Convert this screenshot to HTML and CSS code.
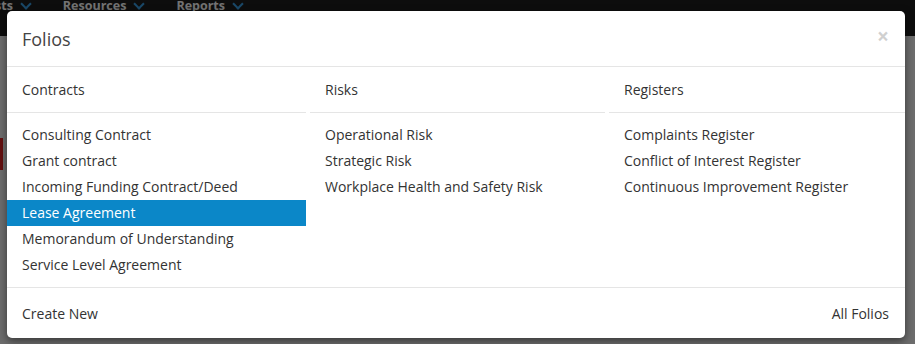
FILE: index.html
```html
<!DOCTYPE html>
<html lang="en">
<head>
    <meta charset="UTF-8">
    <meta name="viewport" content="width=device-width, initial-scale=1.0">
    <title>Folios</title>
    <link rel="stylesheet" href="styles.css">
</head>
<body>

    <!-- page behind the modal -->
    <div class="navbar">
        <span class="nav-item nav-first">sts <span class="caret"></span></span>
        <span class="nav-item">Resources <span class="caret"></span></span>
        <span class="nav-item">Reports <span class="caret"></span></span>
    </div>
    <div class="page">
        <div class="page-flag"></div>
    </div>

    <div class="backdrop"></div>

    <div class="modal">
        <div class="modal-header">
            <h4 class="modal-title">Folios</h4>
            <span class="close">&times;</span>
        </div>

        <div class="modal-body">
            <div class="col">
                <div class="col-head">Contracts</div>
                <ul class="list">
                    <li>Consulting Contract</li>
                    <li>Grant contract</li>
                    <li>Incoming Funding Contract/Deed</li>
                    <li class="active">Lease Agreement</li>
                    <li>Memorandum of Understanding</li>
                    <li>Service Level Agreement</li>
                </ul>
            </div>
            <div class="col">
                <div class="col-head">Risks</div>
                <ul class="list">
                    <li>Operational Risk</li>
                    <li>Strategic Risk</li>
                    <li>Workplace Health and Safety Risk</li>
                </ul>
            </div>
            <div class="col">
                <div class="col-head">Registers</div>
                <ul class="list">
                    <li>Complaints Register</li>
                    <li>Conflict of Interest Register</li>
                    <li>Continuous Improvement Register</li>
                </ul>
            </div>
        </div>

        <div class="modal-footer">
            <span>Create New</span>
            <span>All Folios</span>
        </div>
    </div>

</body>
</html>
```

FILE: styles.css
```css
body {
    margin: 0;
    font-family: "Open Sans", Arial, sans-serif;
    font-size: 14px;
    color: #333;
    background: #fff;
    height: 344px;
    overflow: hidden;
}
.navbar {
    height: 36px;
    background: #1e1e1e;
    display: flex;
    align-items: flex-start;
    gap: 28px;
    font-weight: bold;
    font-size: 12.5px;
    color: #fff;
    line-height: 14px;
}
.nav-item {
    display: inline-flex;
    align-items: center;
    gap: 5px;
    margin-top: -1px;
}
.nav-first {
    margin-left: -5px;
}
.caret {
    width: 6px;
    height: 6px;
    border-right: 2px solid #3aa0e6;
    border-bottom: 2px solid #3aa0e6;
    transform: rotate(45deg);
    margin: -5px 5px 0 4px;
}
.page {
    height: 308px;
    background: #f2f2f2;
}
.page-flag {
    position: absolute;
    left: 0;
    top: 138px;
    width: 3px;
    height: 32px;
    background: #d22;
}
.backdrop {
    position: absolute;
    inset: 0;
    background: rgba(0, 0, 0, 0.55);
}
.modal {
    position: absolute;
    left: 7px;
    top: 11px;
    width: 898px;
    height: 327px;
    background: #fff;
    border-radius: 5px;
    box-shadow: 0 3px 9px rgba(0, 0, 0, 0.5);
    display: flex;
    flex-direction: column;
}
.modal-header {
    display: flex;
    justify-content: space-between;
    align-items: center;
    padding: 0 15px;
    height: 55px;
    border-bottom: 1px solid #e5e5e5;
}
.modal-title {
    margin: 0;
    font-size: 18px;
    font-weight: normal;
    color: #444;
}
.close {
    font-size: 21px;
    font-weight: bold;
    color: #000;
    opacity: 0.18;
    margin-top: -6px;
    margin-right: 1px;
}
.modal-body {
    display: grid;
    grid-template-columns: 299px 295px 296px;
    gap: 4px;
    border-bottom: 1px solid #e5e5e5;
    height: 220px;
}
.col-head {
    height: 45px;
    line-height: 45px;
    padding: 0 15px;
    border-bottom: 1px solid #e5e5e5;
}
.list {
    list-style: none;
    margin: 0;
    padding: 9px 0 0;
}
.list li {
    height: 26px;
    line-height: 26px;
    padding: 0 15px;
}
.list li.active {
    background: #0b87c8;
    color: #fff;
}
.modal-footer {
    flex: 1;
    display: flex;
    justify-content: space-between;
    align-items: center;
    padding: 0 16px 0 15px;
}
```
